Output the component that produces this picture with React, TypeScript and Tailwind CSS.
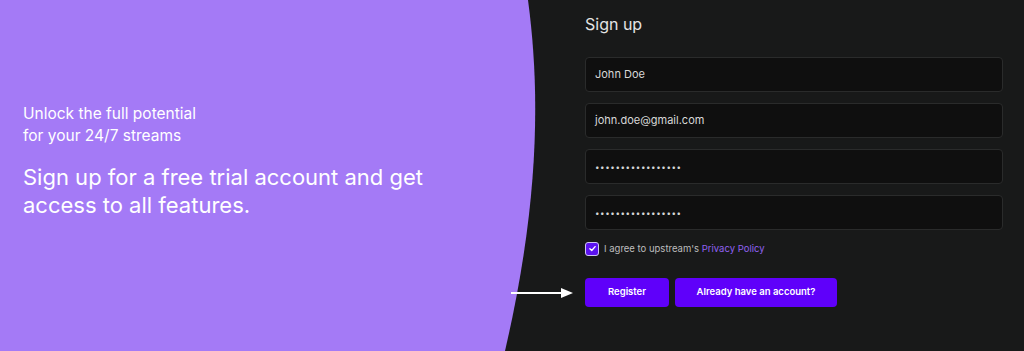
const fontStack = { fontFamily: "Inter, 'Noto Sans', sans-serif" };

const Field = ({ value, password }: { value: string; password?: boolean }) => (
  <div className="flex h-[35px] items-center rounded-[4px] border border-[#2a2b2b] bg-[#0f0f0f] px-[9px]">
    {password ? (
      <span className="text-[8px] tracking-[0.6px] text-[#d6d6d6]">{"•".repeat(17)}</span>
    ) : (
      <span className="text-[11px] text-[#d8d8d8]">{value}</span>
    )}
  </div>
);

export default function App() {
  return (
    <div className="relative h-[351px] w-full overflow-hidden bg-[#181919]" style={fontStack}>
      <svg className="absolute inset-0 h-full w-full" viewBox="0 0 1024 351" preserveAspectRatio="none">
        <path d="M0 0 H528 C540 90 540 200 505 351 H0 Z" fill="#a47af6" />
      </svg>

      <div className="relative flex">
        <div className="w-[585px] pl-[23px] pt-[103px] text-white">
          <p className="text-[15.5px] leading-[22px]">
            Unlock the full potential
            <br />
            for your 24/7 streams
          </p>
          <p className="mt-[16px] text-[22px] leading-[28px]">
            Sign up for a free trial account and get
            <br />
            access to all features.
          </p>
        </div>

        <div className="w-[418px] pt-[12px]">
          <h1 className="text-[16px] leading-[24px] text-[#e4e4e4]">Sign up</h1>
          <div className="mt-[21px] flex flex-col gap-[11px]">
            <Field value="John Doe" />
            <Field value="john.doe@gmail.com" />
            <Field value="" password />
            <Field value="" password />
          </div>
          <div className="mt-[11px] flex h-[15px] items-center gap-[5px]">
            <span className="flex h-[14px] w-[14px] items-center justify-center rounded-[3px] border border-[#cfc4f5] bg-[#5b12f0]">
              <svg viewBox="0 0 12 12" className="h-[9px] w-[9px]">
                <path d="M2.5 6.3 L5 8.6 L9.5 3.5" fill="none" stroke="white" strokeWidth="1.8" strokeLinecap="round" strokeLinejoin="round" />
              </svg>
            </span>
            <span className="text-[9.5px] leading-[15px] text-[#bdbdbd]">
              I agree to upstream's <span className="text-[#9061f0]">Privacy Policy</span>
            </span>
          </div>
          <div className="relative mt-[22px] flex gap-[6px]">
            <svg className="absolute left-[-74px] top-[10px] h-[10px] w-[62px]" viewBox="0 0 62 10">
              <line x1="0" y1="5" x2="52" y2="5" stroke="white" strokeWidth="2" />
              <path d="M50 0 L62 5 L50 10 Z" fill="white" />
            </svg>
            <button className="h-[29px] w-[84px] rounded-[4px] bg-[#5f00fa] text-[9.5px] font-semibold text-white">
              Register
            </button>
            <button className="h-[29px] w-[162px] rounded-[4px] bg-[#5f00fa] text-[9.5px] font-semibold text-white">
              Already have an account?
            </button>
          </div>
        </div>
      </div>
    </div>
  );
}
